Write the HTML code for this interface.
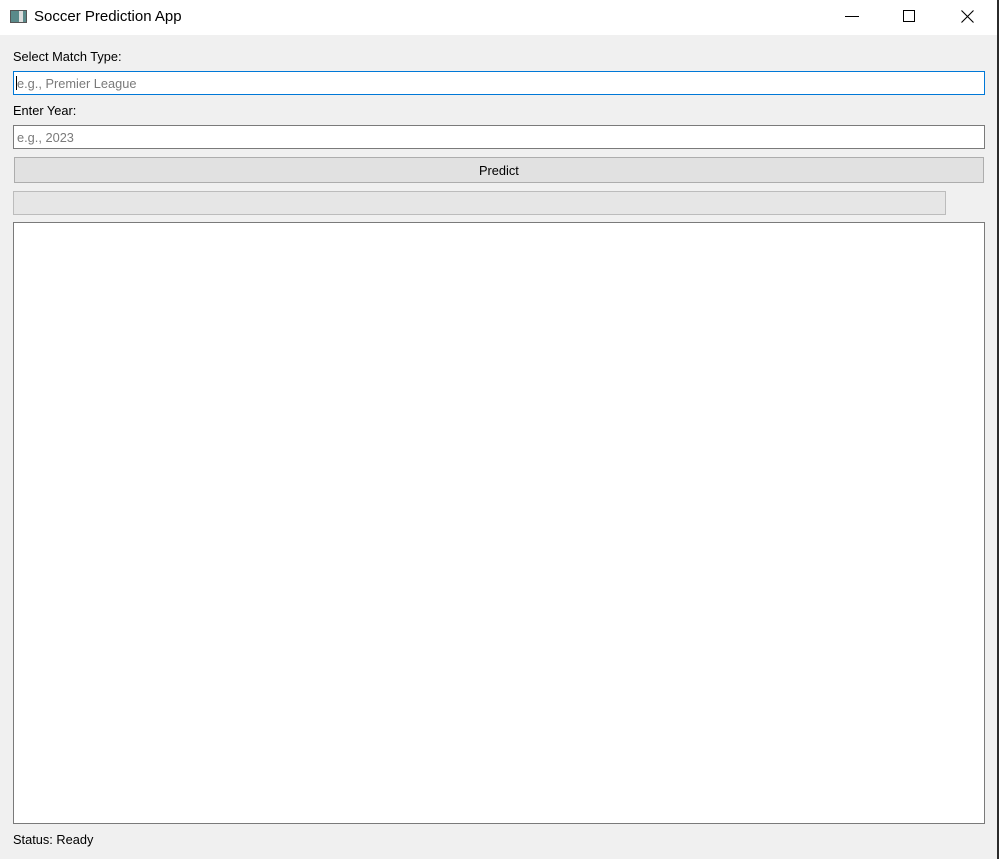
<html><head><style>
body{margin:0;width:999px;height:859px;background:#f0f0f0;font-family:"Liberation Sans",sans-serif;font-size:12.8px;color:#000;position:relative;overflow:hidden}
div{position:absolute;box-sizing:border-box}
.t{white-space:nowrap}
</style></head><body>
<div style="left:0;top:0;width:997px;height:35px;background:#fff"></div>
<div style="left:997px;top:0;width:2px;height:859px;background:#2b2b2b"></div>
<div style="left:10px;top:10px;width:17px;height:13px;border:1px solid #555;background:linear-gradient(90deg,#5a8a8a 0 55%,#ddd 55% 80%,#5a8a8a 80%)"></div>
<div class="t" style="left:34px;top:8px;font-size:15px">Soccer Prediction App</div>
<div style="left:845px;top:16px;width:14px;height:1px;background:#000"></div>
<div style="left:903px;top:10px;width:12px;height:12px;border:1px solid #000"></div>
<svg style="position:absolute;left:961px;top:10px" width="13" height="13"><path d="M0.5 0.5L12.5 12.5M12.5 0.5L0.5 12.5" stroke="#000" stroke-width="1.1"/></svg>
<div class="t" style="left:13px;top:49px">Select Match Type:</div>
<div style="left:13px;top:71px;width:972px;height:24px;background:#fff;border:1px solid #0078d7"></div>
<div style="left:16px;top:76px;width:1px;height:14px;background:#000"></div>
<div class="t" style="left:17px;top:76px;color:#7a7a7a">e.g., Premier League</div>
<div class="t" style="left:13px;top:103px">Enter Year:</div>
<div style="left:13px;top:125px;width:972px;height:24px;background:#fff;border:1px solid #7a7a7a"></div>
<div class="t" style="left:17px;top:130px;color:#7a7a7a">e.g., 2023</div>
<div style="left:14px;top:157px;width:970px;height:26px;background:#e1e1e1;border:1px solid #adadad"></div>
<div class="t" style="left:479px;top:163px">Predict</div>
<div style="left:13px;top:191px;width:933px;height:24px;background:#e6e6e6;border:1px solid #bcbcbc"></div>
<div style="left:13px;top:222px;width:972px;height:602px;background:#fff;border:1px solid #7a7a7a"></div>
<div class="t" style="left:13px;top:832px">Status: Ready</div>
</body></html>
